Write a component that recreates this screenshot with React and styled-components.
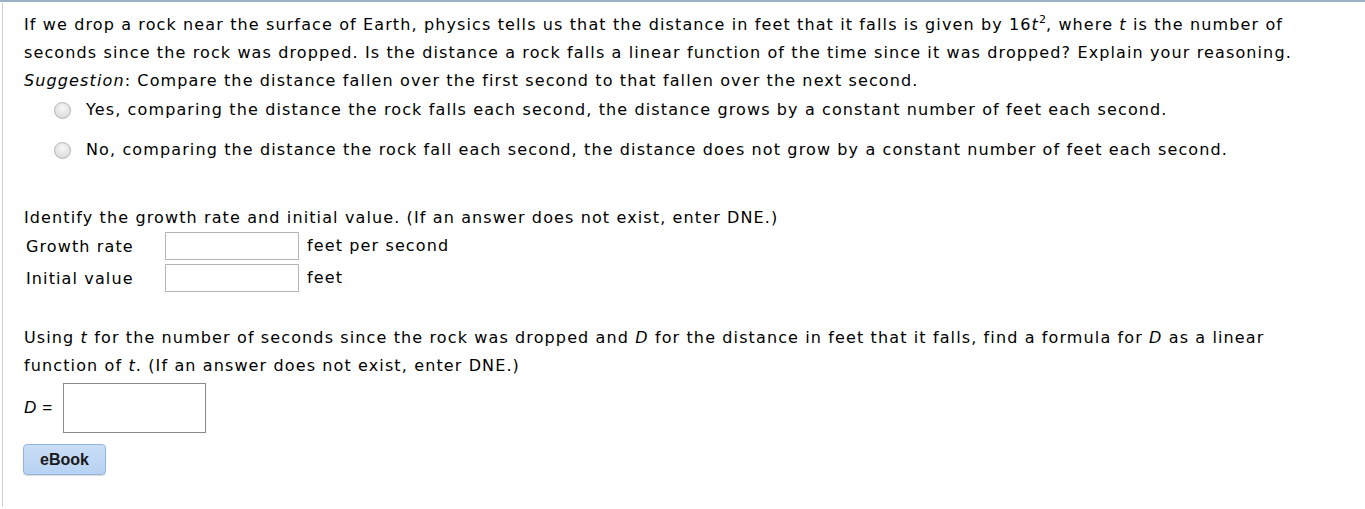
import React from 'react'
import styled, { createGlobalStyle } from 'styled-components'

const GlobalStyle = createGlobalStyle`
    html, body {
        margin: 0;
        padding: 0;
        background: #fff;
    }
    body {
        font-family: Verdana, "DejaVu Sans", sans-serif;
        color: #000;
    }
`

const Frame = styled.div`
    border-top: 2px solid #9db2c9;
    height: 507px;
    box-sizing: border-box;
    padding-left: 2px;
`

const Panel = styled.div`
    border-left: 1px solid #cfcfcf;
    height: 100%;
    box-sizing: border-box;
    margin-top: 1px;
    padding: 8px 45px 0 21px;
    letter-spacing: 1.12px;
`

const Text = styled.p`
    margin: 0;
    font-size: 16px;
    line-height: 28px;
    margin-top: ${p => p.$top || 0}px;
`

const Sup = styled.sup`
    font-size: 11px;
    line-height: 0;
    vertical-align: 7px;
    letter-spacing: 0;
`

const RadioList = styled.div`
    display: flex;
    flex-direction: column;
    gap: 12px;
    padding-left: 30px;
    margin-top: 1px;
`

const RadioRow = styled.label`
    display: flex;
    align-items: center;
    gap: 15px;
    font-size: 16px;
    line-height: 28px;
`

const Radio = styled.span`
    width: 15px;
    height: 15px;
    border-radius: 50%;
    border: 1px solid #b3b3b3;
    background: radial-gradient(circle at 50% 35%, #f7f7f7 0%, #e2e2e2 60%, #cfcfcf 100%);
    flex: none;
`

const FieldTable = styled.div`
    display: grid;
    grid-template-columns: 131px 134px auto;
    column-gap: 8px;
    row-gap: 4px;
    align-items: center;
    padding-left: 2px;
`

const Label = styled.span`
    font-size: 16px;
`

const Unit = styled.span`
    font-size: 16px;
    margin-top: -2px;
`

const Input = styled.div`
    width: ${p => p.$w}px;
    height: ${p => p.$h}px;
    box-sizing: border-box;
    border: 1px solid ${p => p.$dark ? '#8a8a8a' : '#b5b5b5'};
    background: #fff;
`

const FormulaRow = styled.div`
    display: flex;
    align-items: center;
    gap: 10px;
    margin-top: 3px;
    font-family: "Liberation Sans", Arial, sans-serif;
    font-size: 17px;
    letter-spacing: 0.6px;
`

const Button = styled.button`
    margin-top: 11px;
    margin-left: -1px;
    width: 83px;
    height: 31px;
    border: 1px solid #94b4dc;
    border-radius: 4px;
    background: linear-gradient(#c9def7, #b7d2f2);
    box-shadow: 0 1px 1px rgba(0, 0, 0, 0.15);
    font-family: "Liberation Sans", Arial, sans-serif;
    font-weight: bold;
    font-size: 16px;
    color: #1a1a1a;
    padding: 0;
    display: block;
`

export default function App() {
    return (
        <>
            <GlobalStyle />
            <Frame>
                <Panel>
                    <Text>
                        If we drop a rock near the surface of Earth, physics tells us that the distance in feet that it falls is given by 16<i>t</i><Sup>2</Sup>, where <i>t</i> is the number of seconds since the rock was dropped. Is the distance a rock falls a linear function of the time since it was dropped? Explain your reasoning.
                        <br />
                        <i>Suggestion</i>: Compare the distance fallen over the first second to that fallen over the next second.
                    </Text>
                    <RadioList>
                        <RadioRow><Radio />Yes, comparing the distance the rock falls each second, the distance grows by a constant number of feet each second.</RadioRow>
                        <RadioRow><Radio />No, comparing the distance the rock fall each second, the distance does not grow by a constant number of feet each second.</RadioRow>
                    </RadioList>
                    <Text $top={40}>Identify the growth rate and initial value. (If an answer does not exist, enter DNE.)</Text>
                    <FieldTable>
                        <Label>Growth rate</Label>
                        <Input $w={134} $h={28} />
                        <Unit>feet per second</Unit>
                        <Label>Initial value</Label>
                        <Input $w={134} $h={28} />
                        <Unit>feet</Unit>
                    </FieldTable>
                    <Text $top={32}>
                        Using <i>t</i> for the number of seconds since the rock was dropped and <i>D</i> for the distance in feet that it falls, find a formula for <i>D</i> as a linear function of <i>t</i>. (If an answer does not exist, enter DNE.)
                    </Text>
                    <FormulaRow>
                        <span><i>D</i> =</span>
                        <Input $w={143} $h={50} $dark />
                    </FormulaRow>
                    <Button>eBook</Button>
                </Panel>
            </Frame>
        </>
    )
}
